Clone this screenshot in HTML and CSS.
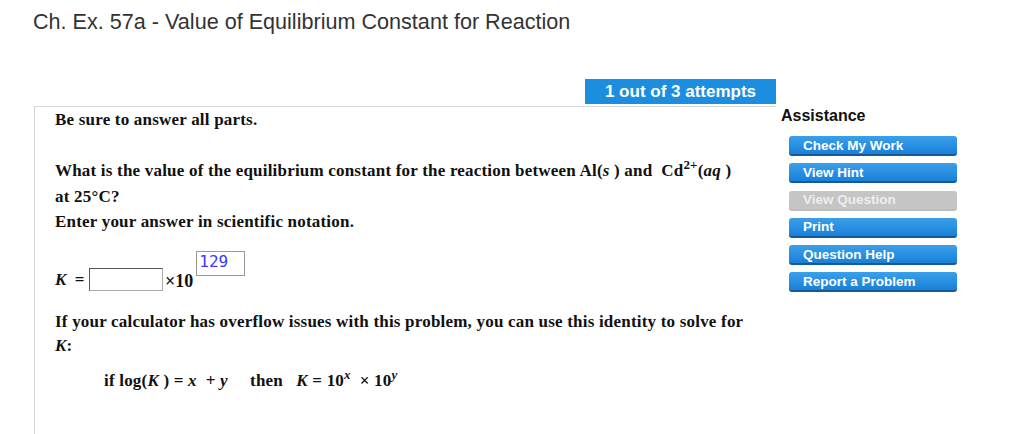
FILE: index.html
```html
<!DOCTYPE html>
<html lang="en">
<head>
<meta charset="UTF-8">
<meta name="viewport" content="width=device-width, initial-scale=1.0">
<link rel="stylesheet" href="styles.css">
<title>Ch. Ex. 57a - Value of Equilibrium Constant for Reaction</title>
</head>
<body>
  <h1 class="title">Ch. Ex. 57a - Value of Equilibrium Constant for Reaction</h1>

  <div class="layout">
    <div class="main">
      <div class="attempts">1 out of 3 attempts</div>
      <div class="panel">
        <p class="intro">Be sure to answer all parts.</p>

        <p class="question">What is the value of the equilibrium constant for the reaction between Al(<i>s</i> ) and &nbsp;Cd<sup>2+</sup>(<i>aq</i> )<br>at 25°C?</p>
        <p class="question">Enter your answer in scientific notation.</p>

        <div class="answer">
          <span class="k"><i>K</i> &nbsp;=</span><input type="text" class="mantissa"><span class="times">×10</span><input type="text" class="exponent" value="129">
        </div>

        <p class="note">If your calculator has overflow issues with this problem, you can use this identity to solve for<br><i>K</i>:</p>
        <p class="formula">if log(<i>K</i> ) = <i>x</i> &nbsp;+ <i>y</i> &nbsp;&nbsp;&nbsp; then &nbsp;&nbsp;<i>K</i> = 10<sup><i>x</i></sup> &nbsp;× 10<sup><i>y</i></sup></p>
      </div>
    </div>

    <aside class="assist">
      <h2>Assistance</h2>
      <button class="btn">Check My Work</button>
      <button class="btn">View Hint</button>
      <button class="btn btn-off">View Question</button>
      <button class="btn">Print</button>
      <button class="btn">Question Help</button>
      <button class="btn">Report a Problem</button>
    </aside>
  </div>
</body>
</html>
```
FILE: styles.css
```css
body {
  margin: 0;
  background-color: #fff;
  font-family: "Liberation Serif", "Times New Roman", serif;
  color: #111;
}

.title {
  margin: 0;
  padding: 9px 0 0 33px;
  height: 79px;
  box-sizing: border-box;
  font-family: "Liberation Sans", Arial, sans-serif;
  font-weight: normal;
  font-size: 21.6px;
  color: #333;
}

.layout {
  display: flex;
}

.main {
  margin-left: 34px;
  width: 742px;
}

.attempts {
  margin-left: auto;
  width: 191px;
  height: 25px;
  line-height: 25px;
  text-align: center;
  background-color: #1c8ee0;
  color: #fff;
  font-family: "Liberation Sans", Arial, sans-serif;
  font-weight: bold;
  font-size: 17px;
  margin-bottom: 2px;
}

.panel {
  border-top: 1px solid #d3d7d9;
  border-left: 1px solid #d3d7d9;
  padding: 4px 0 0 20px;
  height: 330px;
  font-weight: bold;
  font-size: 17px;
  letter-spacing: 0.2px;
}

.panel p {
  margin: 0;
}

.intro {
  line-height: 18px;
  margin-bottom: 29px !important;
}

.question {
  line-height: 25.5px;
}

sup {
  font-size: 13px;
  line-height: 0;
}

.answer {
  display: flex;
  align-items: flex-end;
  height: 40px;
  margin-top: 16px;
}

.k {
  width: 34px;
  line-height: 22px;
  letter-spacing: 0;
}

.mantissa {
  width: 74px;
  height: 23px;
  box-sizing: border-box;
  border: 1px solid #aaa;
  border-top-color: #555;
  border-left-color: #555;
  margin: 0;
  padding: 0;
}

.times {
  line-height: 19px;
  margin: 0 3px 0 2px;
  font-size: 18px;
  letter-spacing: 0;
}

.exponent {
  align-self: flex-start;
  width: 49px;
  height: 25px;
  box-sizing: border-box;
  border: 1px solid #999;
  padding: 0 0 3px 2px;
  font-family: "DejaVu Sans Mono", monospace;
  font-size: 16px;
  color: #3a3aff;
}

.note {
  margin-top: 19px !important;
  line-height: 24px;
}

.formula {
  margin: 11px 0 0 49px !important;
  line-height: 24px;
}

.assist {
  margin-left: 5px;
  padding-top: 28px;
  font-family: "Liberation Sans", Arial, sans-serif;
}

.assist h2 {
  margin: 0 0 11px;
  font-size: 16px;
  line-height: 18px;
  color: #111;
}

.btn {
  display: block;
  margin: 0 0 7.3px 8px;
  width: 168px;
  height: 20px;
  padding: 0 0 0 14px;
  text-align: left;
  border: none;
  border-bottom: 2px solid #15599b;
  border-radius: 3px;
  background: linear-gradient(#3aa0ea, #1a80d8);
  color: #fff;
  font-family: "Liberation Sans", Arial, sans-serif;
  font-weight: bold;
  font-size: 13.5px;
  box-sizing: border-box;
}

.btn-off {
  background: #c5c5c5;
  border-bottom-color: #bdbdbd;
  color: #eee;
}
```
